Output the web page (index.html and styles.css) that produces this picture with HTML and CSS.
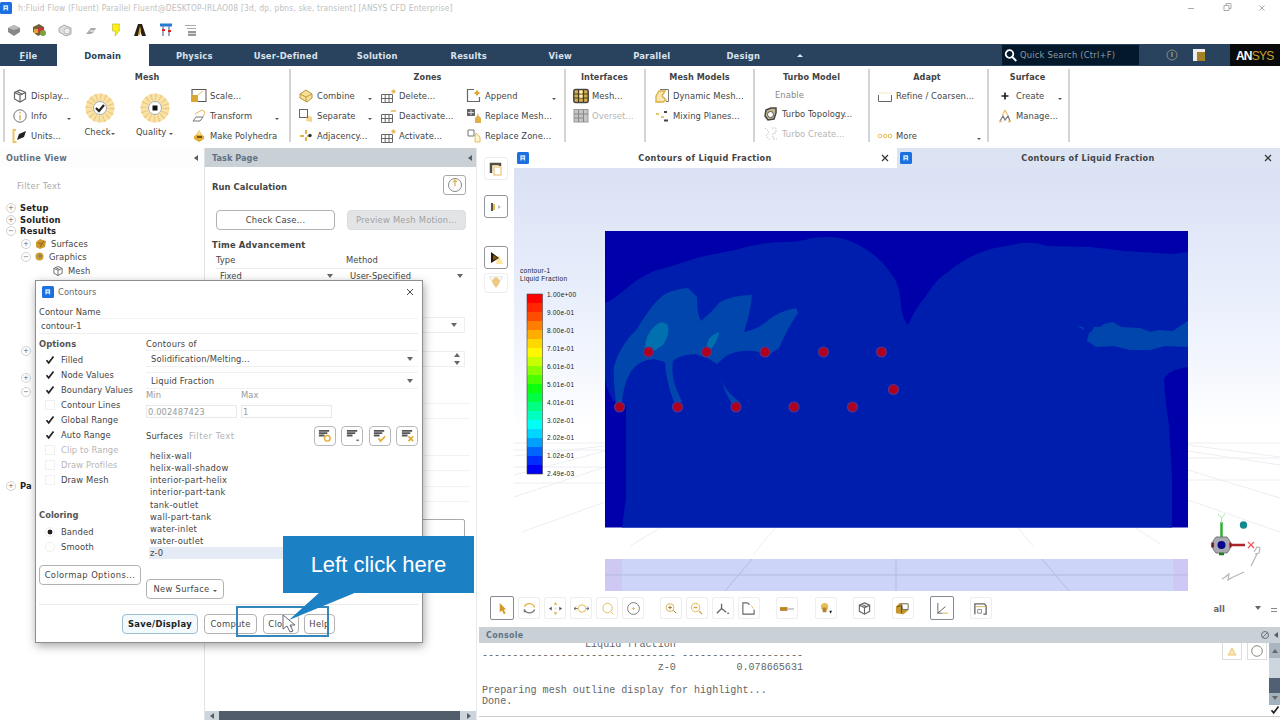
FILE: index.html
```html
<!DOCTYPE html>
<html lang="en">
<head>
<meta charset="utf-8">
<title>Fluid Flow</title>
<link rel="stylesheet" href="styles.css">
</head>
<body>
<svg class="defs" width="0" height="0">
  <defs>
    <symbol id="app" viewBox="0 0 12 12"><rect width="12" height="12" rx="1.5" fill="#1c6fe0"/><path d="M4 8.500V4h3.500v4.500M4 6.500h3.500" fill="none" stroke="#d4eaff" stroke-width="1.300"/></symbol>
    <symbol id="cube" viewBox="0 0 16 16"><path d="M8 2l5.500 2.500v6.500L8 14l-5.500-3V4.500zM2.500 4.500L8 7l5.500-2.500M8 7v7M5 3.500l6 3" fill="none" stroke="#666" stroke-width="1.200"/></symbol>
    <symbol id="info" viewBox="0 0 16 16"><circle cx="8" cy="8" r="6.200" fill="#fff" stroke="#707070"/><path d="M8 4v1.500M8 7v5" stroke="#d6ad45" stroke-width="1.300"/></symbol>
    <symbol id="units" viewBox="0 0 16 16"><path d="M4 2H1.500v12h3" fill="none" stroke="#f0c068" stroke-width="2"/><path d="M5 12l2-6 7-3-2 6z" fill="#222"/></symbol>
    <symbol id="scale" viewBox="0 0 16 16"><rect x="1" y="1.500" width="14" height="12" fill="#fff" stroke="#555"/><path d="M1 7h6v7H1z" fill="#d9a72d"/><path d="M7 7l5-4" stroke="#e3bd66"/></symbol>
    <symbol id="transform" viewBox="0 0 16 16"><path d="M2 13l3-4h7l-3 4z" fill="#fff" stroke="#777"/><path d="M4 6l7-4 3 2-2 5" fill="none" stroke="#e5bc5b"/></symbol>
    <symbol id="poly" viewBox="0 0 16 16"><path d="M8 2l3 5 2 1v3l-5 3-5-3V8l2-1z" fill="#e2ad32"/><path d="M6 8h5v2H6z" fill="#795419"/><path d="M8 2l2 5H6z" fill="#f9de97"/></symbol>
    <symbol id="combine" viewBox="0 0 16 16"><path d="M2 6l6-4 6 4v4l-5 4-7-4z" fill="#f6df9a" stroke="#b8923f"/><path d="M2 6l6 3 6-3M8 9v4" fill="none" stroke="#c4983b"/></symbol>
    <symbol id="separate" viewBox="0 0 16 16"><path d="M9 7l5 2v5l-6-1z" fill="#f3d48b"/><rect x="1.500" y="1.500" width="8" height="8" fill="#fff" stroke="#666"/></symbol>
    <symbol id="adjacency" viewBox="0 0 16 16"><path d="M8 2v12M2 8h12" stroke="#e3b34b" stroke-width="2" stroke-dasharray="4 3"/><circle cx="12" cy="7.500" r="1.700" fill="#333"/></symbol>
    <symbol id="grid" viewBox="0 0 16 16"><path d="M1.500 6.500h11v8h-11zM5.200 6.500v8M9 6.500v8M1.500 10.500h11" fill="none" stroke="#666"/><path d="M13.500 1.500v4M11.500 3.500h4" stroke="#e7b550" stroke-width="1.800"/></symbol>
    <symbol id="gridminus" viewBox="0 0 16 16"><path d="M1.500 6.500h11v8h-11zM5.200 6.500v8M9 6.500v8M1.500 10.500h11" fill="none" stroke="#666"/><path d="M11 3h5" stroke="#e7b550" stroke-width="1.500"/></symbol>
    <symbol id="append" viewBox="0 0 16 16"><path d="M8 1.500H1.500v12h12V9" fill="none" stroke="#666" stroke-width="1.200"/><path d="M11 2.500v5M8.500 5h5" stroke="#e2a72f" stroke-width="2"/></symbol>
    <symbol id="rmesh" viewBox="0 0 16 16"><path d="M1 1h8v7H1z" fill="#666"/><path d="M2 4.500h6M5 2v5" stroke="#ddd"/><path d="M11.500 5l1.500 3 2 2v5H9v-5l2-2z" fill="#e2b24a"/></symbol>
    <symbol id="rzone" viewBox="0 0 16 16"><path d="M2 2h6v6H2z" fill="#fff" stroke="#777"/><path d="M10 5l4 4v5H9V9z" fill="#fff3ca" stroke="#e5bf67"/></symbol>
    <symbol id="imesh" viewBox="0 0 16 16"><rect x=".8" y="1.500" width="14.400" height="13" rx="2" fill="#d7b04d" stroke="#444" stroke-width="1.500"/><path d="M1 6h14M1 10h14M5.500 2v12M10.500 2v12" stroke="#443c24" stroke-width="1.200"/><path d="M6.500 6.700h3v3h-3zM6.500 2.500h3v3h-3z" fill="#fff2bd"/></symbol>
    <symbol id="overset" viewBox="0 0 16 16"><rect x="1" y="1.500" width="14" height="12.500" fill="#c6c6c6" stroke="#999"/><path d="M1 6h14M1 10h9M5.500 2v12M10.500 2v12" stroke="#888"/></symbol>
    <symbol id="dynamic" viewBox="0 0 16 16"><path d="M6 1.500h8.500v12H12" fill="none" stroke="#777"/><path d="M2 8l3-5h6L8 8l4 4-3 2H2z" fill="#fae6b3" stroke="#deb044" stroke-width="1.400"/></symbol>
    <symbol id="mixing" viewBox="0 0 16 16"><path d="M2 6h3M7 9h3" stroke="#e9c469" stroke-width="2"/><path d="M10 4h3M10 12.500h4" stroke="#444" stroke-width="2"/></symbol>
    <symbol id="turbo" viewBox="0 0 16 16"><path d="M3 4l5-2h5v5l-2 6-6 1-3-4z" fill="#c4b98d" stroke="#444" stroke-width="1.500"/><circle cx="7.500" cy="8.500" r="3" fill="#fff" stroke="#555"/></symbol>
    <symbol id="tcreate" viewBox="0 0 16 16"><path d="M2 2l4 4-3 4 4 4M9 2h4v5h-3v6h4" fill="none" stroke="#ccc" stroke-dasharray="2 1"/></symbol>
    <symbol id="refine" viewBox="0 0 16 16"><path d="M1.500 7v6.500h13V7" fill="none" stroke="#666"/><path d="M2 5h12" stroke="#f8e8c4"/></symbol>
    <symbol id="more" viewBox="0 0 16 16"><g fill="none" stroke="#e4bd50"><circle cx="3" cy="8" r="1.800"/><circle cx="8" cy="8" r="1.800"/><circle cx="13" cy="8" r="1.800"/></g></symbol>
    <symbol id="plus" viewBox="0 0 16 16"><path d="M8 4.500v7M4.500 8h7" stroke="#222" stroke-width="1.700"/></symbol>
    <symbol id="manage" viewBox="0 0 16 16"><path d="M3 13l3-5 2 4 3-4 2 5" fill="none" stroke="#777" stroke-width="1.200"/><path d="M2 13.500h3M11 13.500h3M8 2l2.500 5M8 2L5.500 7" stroke="#e9c46c" stroke-width="1.300"/></symbol>
    <symbol id="list" viewBox="0 0 16 16"><path d="M2 3h11M2 5.500h9M2 8h6" stroke="#555" stroke-width="2"/></symbol>
    <symbol id="check" viewBox="0 0 10 10"><path d="M1.500 5.200l2.200 2.600L8.500 1.500" fill="none" stroke="#222" stroke-width="1.700"/></symbol>
    <symbol id="surf" viewBox="0 0 12 12"><path d="M1 4l4-3 6 2-1 6-5 2-4-2z" fill="#cc982b"/><path d="M3 5l4 1 2-3M5 9l2-3" stroke="#8a651f" fill="none"/></symbol>
    <symbol id="globe" viewBox="0 0 12 12"><circle cx="5.500" cy="5.500" r="4" fill="#cf9c2e"/><circle cx="6" cy="5" r="2" fill="#8e845e"/></symbol>
    <symbol id="gear" viewBox="0 0 30 30"><circle cx="15" cy="15" r="10.500" fill="none" stroke="#f9e2a8" stroke-width="8"/><circle cx="15" cy="15" r="11" fill="none" stroke="#ebc675" stroke-width="7" stroke-dasharray="1 3.320"/><circle cx="15" cy="15" r="6.500" fill="#fff" stroke="#aaa"/></symbol>
  </defs>
</svg>

<div class="window">
  <header class="titlebar">
    <svg class="i12"><use href="#app"/></svg>
    <span class="title">h:Fluid Flow (Fluent) Parallel Fluent@DESKTOP-IRLAO08 [3d, dp, pbns, ske, transient] [ANSYS CFD Enterprise]</span>
    <span class="winctl"><svg width="84" height="12" fill="none" stroke="#aaa"><path d="M3 6.500h6"/><path d="M39 3.500h5v5h-5zM41 3.500v-2h5v5h-2M74.500 3.500l5 5M79.500 3.500l-5 5"/></svg></span>
  </header>

  <div class="quickbar">
    <svg width="200" height="18" viewBox="0 0 200 18">
      <path d="M2 6l6-3 6 3v4l-6 4-6-4z" fill="#888"/><path d="M2 6l6 2 6-2-6-3z" fill="#bbb"/>
      <path d="M27 5l6-3 5 3v6l-6 3-5-4z" fill="#74603a"/><path d="M32 6h5v5h-5z" fill="#c33"/><circle cx="37" cy="11" r="3" fill="#79a23b"/><path d="M28 7h4v4h-4z" fill="#dba93a"/>
      <path d="M53 6l5-3 7 3v6l-5 2-7-4z" fill="#ddd" stroke="#aaa"/><circle cx="61" cy="9" r="3" fill="#eee" stroke="#bbb"/>
      <path d="M80 12l5-6h5l-2 4-3 2z" fill="#aaa"/><path d="M84 9h5" stroke="#fff"/>
      <path d="M106.500 2h7l-.5 6h1l-5 6 .5-5h-3z" fill="#ffef15" stroke="#c2b92c" stroke-width=".7"/>
      <path d="M128 14l4-12h4l4 12h-4l-2-6-2 6z" fill="#282015"/><path d="M132 13l2-9 1 4-1 5z" fill="#e2a932"/>
      <path d="M154 3h12" stroke="#247bd1" stroke-width="3"/><path d="M157 4v10M163 4v10" stroke="#788db4" stroke-width="1.500"/><path d="M156 8h3M162 9h3" stroke="#d22" stroke-width="2"/>
      <path d="M179 3.500h11M181 6.500h9" stroke="#aaa"/><path d="M182 9h8v5h-8z" fill="#999"/><path d="M182 11.500h8" stroke="#ddd"/>
    </svg>
  </div>

  <nav class="tabs">
    <span class="tab file"><u>F</u>ile</span><span class="tab on">Domain</span><span class="tab">Physics</span><span class="tab">User-Defined</span><span class="tab">Solution</span><span class="tab">Results</span><span class="tab">View</span><span class="tab">Parallel</span><span class="tab">Design</span><span class="up"></span>
    <div class="search"><svg width="13" height="13" fill="none" stroke="#fff" stroke-width="1.800"><circle cx="5.500" cy="5" r="3.800"/><path d="M8.300 8l4 4"/></svg><span>Quick Search (Ctrl+F)</span></div>
    <svg class="helpers" width="50" height="16"><circle cx="9" cy="8" r="5" fill="none" stroke="#868d80"/><path d="M9 5v5" stroke="#c9b46b"/><path d="M30 2h12v3h-8v9h-4z" fill="#eee"/><path d="M34 5h8v9h-8z" fill="#a48122"/></svg>
    <div class="brand"><b>AN</b><b class="gold">SYS</b></div>
  </nav>

  <section class="ribbon">
    <div class="group g-mesh"><h3>Mesh</h3><div class="cols">
      <div class="col c1"><p><svg><use href="#cube"/></svg>Display...</p><p><svg><use href="#info"/></svg>Info<i></i></p><p><svg><use href="#units"/></svg>Units...</p></div>
      <div class="big"><svg class="i30" viewBox="0 0 30 30"><use href="#gear"/><path d="M11 15l3 3 5-6" fill="none" stroke="#222" stroke-width="2.200"/></svg><span>Check<i></i></span></div>
      <div class="big"><svg class="i30" viewBox="0 0 30 30"><use href="#gear"/><rect x="12.500" y="12.500" width="5" height="5" fill="#111"/></svg><span>Quality <i></i></span></div>
      <div class="col c2"><p><svg><use href="#scale"/></svg>Scale...</p><p><svg><use href="#transform"/></svg>Transform<i></i></p><p><svg><use href="#poly"/></svg>Make Polyhedra</p></div>
    </div></div>
    <div class="group g-zones"><h3>Zones</h3><div class="cols">
      <div class="col c3"><p><svg><use href="#combine"/></svg>Combine<i></i></p><p><svg><use href="#separate"/></svg>Separate<i></i></p><p><svg><use href="#adjacency"/></svg>Adjacency...</p></div>
      <div class="col c4"><p><svg><use href="#grid"/></svg>Delete...</p><p><svg><use href="#gridminus"/></svg>Deactivate...</p><p><svg><use href="#grid"/></svg>Activate...</p></div>
      <div class="col c5"><p><svg><use href="#append"/></svg>Append<i></i></p><p><svg><use href="#rmesh"/></svg>Replace Mesh...</p><p><svg><use href="#rzone"/></svg>Replace Zone...</p></div>
    </div></div>
    <div class="group g-int"><h3>Interfaces</h3><div class="col"><p><svg><use href="#imesh"/></svg>Mesh...</p><p class="off"><svg><use href="#overset"/></svg>Overset...</p></div></div>
    <div class="group g-mod"><h3>Mesh Models</h3><div class="col"><p><svg><use href="#dynamic"/></svg>Dynamic Mesh...</p><p><svg><use href="#mixing"/></svg>Mixing Planes...</p></div></div>
    <div class="group g-turbo"><h3>Turbo Model</h3><div class="col"><p class="enable">Enable</p><p><svg><use href="#turbo"/></svg>Turbo Topology...</p><p class="off"><svg><use href="#tcreate"/></svg>Turbo Create...</p></div></div>
    <div class="group g-adapt"><h3>Adapt</h3><div class="col"><p><svg><use href="#refine"/></svg>Refine / Coarsen...</p><p></p><p><svg><use href="#more"/></svg>More<i></i></p></div></div>
    <div class="group g-surf"><h3>Surface</h3><div class="col"><p><svg><use href="#plus"/></svg>Create<i></i></p><p><svg><use href="#manage"/></svg>Manage...</p></div></div>
  </section>

  <main class="main">
    <aside class="outline">
      <div class="phead light"><span>Outline View</span><i class="left"></i></div>
      <div class="filter">Filter Text</div>
      <ul class="tree">
        <li class="root"><em>+</em>Setup</li><li class="root"><em>+</em>Solution</li><li class="root"><em>−</em>Results</li>
        <li class="sub"><em>+</em><svg class="i12"><use href="#surf"/></svg>Surfaces</li>
        <li class="sub sub2"><em>−</em><svg class="i12"><use href="#globe"/></svg>Graphics</li>
        <li class="leaf"><svg class="i12"><use href="#cube"/></svg>Mesh</li>
        <li class="sub g1"><em>+</em></li><li class="sub g2"><em>+</em></li><li class="sub g3"><em>−</em></li>
        <li class="root g4"><em>+</em>Pa</li>
      </ul>
    </aside>

    <section class="task">
      <div class="phead"><span>Task Page</span><i class="left"></i></div>
      <div class="taskbody">
        <div class="trow"><b>Run Calculation</b><span class="help"><svg width="16" height="16" fill="none" stroke="#888"><circle cx="8" cy="8" r="6.500"/><path d="M8 4v5M6 5l2-2 2 2" stroke="#e4b963" stroke-width="1.500"/></svg></span></div>
        <div class="tbtns"><span class="btn">Check Case...</span><span class="btn disabled">Preview Mesh Motion...</span></div>
        <b class="adv">Time Advancement</b>
        <div class="pair"><span>Type</span><span>Method</span></div>
        <div class="pair sel"><span>Fixed<i class="dn"></i></span><span>User-Specified<i class="dn"></i></span></div>
        <div class="rest">
          <div class="combo"><i class="dn"></i></div>
          <div class="combo spin"><i class="upa"></i><i class="dn"></i></div>
          <div class="faint"></div><div class="faint"></div><div class="faint last"></div>
          <div class="longbtn"></div>
        </div>
      </div>
      <div class="hscroll"><i class="left"></i><span></span><i class="right"></i></div>
    </section>

    <div class="work">
      <div class="viewer">
        <div class="sidebar">
          <span class="tool"><svg viewBox="0 0 16 16"><path d="M3 12V3h9v2" fill="none" stroke="#554f3b" stroke-width="2.500"/><rect x="6" y="6" width="7" height="8" fill="#fff" stroke="#e4ba56"/></svg></span>
          <span class="tool hot"><svg viewBox="0 0 16 16"><path d="M5 4H3v8h2z" fill="#555"/><path d="M5 5h2v6H5z" fill="#e4bd4d"/><path d="M10 6l3 2-3 2z" fill="#bbb"/></svg></span>
          <span class="tool hot third"><svg viewBox="0 0 16 16"><path d="M9 8l2-3 4 9H8z" fill="#ffe4a1"/><path d="M3 2v11l8-5z" fill="#241a09"/><path d="M5 5l5 3-5 2z" fill="#865713"/></svg></span>
          <span class="tool fourth"><svg viewBox="0 0 16 16"><path d="M1 2h14M2 3l6 9 6-9" fill="none" stroke="#ddd"/><path d="M4 5l4-3 4 3-1 4-3 4-3-4z" fill="#ecca80"/></svg></span>
        </div>
        <div class="screen">
          <div class="vtabs"><div class="vtab"><svg class="i12"><use href="#app"/></svg><b>Contours of Liquid Fraction</b><svg class="x" viewBox="0 0 8 8"><path d="M1 1l6 6M7 1L1 7"/></svg></div><div class="vtab blue"><svg class="i12"><use href="#app"/></svg><b>Contours of Liquid Fraction</b><svg class="x" viewBox="0 0 8 8"><path d="M1 1l6 6M7 1L1 7"/></svg></div></div>
          <svg class="scene" viewBox="514 168 766 423">
            <defs>
              <linearGradient id="sky" x1="0" y1="0" x2="0" y2="1"><stop offset="0" stop-color="#dae1f4"/><stop offset=".36" stop-color="#ecf1fd"/><stop offset=".62" stop-color="#fff"/></linearGradient>
            </defs>
            <rect x="514" y="168" width="766" height="423" fill="url(#sky)"/>
            <g stroke="#eceef2" fill="none"><path d="M514 443h91M514 456l91-10M514 475l91-24M514 497l91-30M522 532l83-30M514 450h91M514 467h91M514 483h91M1188 443h92M1188 451l92 14M1188 445l92 12M1188 470l92 28M1188 500l92 32M1188 458h92M1188 480h92M660 528l-30 18M775 528l-22 27M1018 528l15 18M1136 528l24 16"/></g>
            <rect x="605" y="231" width="583" height="296.500" fill="#0000aa"/>
            <path d="M605 303C613 300 618 295 627 288Q645 272 665 268L700 257L735 250Q760 242 785 242Q800 242 812 238Q835 235 850 241Q877 252 891 274Q900 282 901 307Q902 318 908 325Q915 309 926 296Q937 278 948 272Q965 257 990 249Q1012 245 1022 243Q1036 242 1046 246L1090 247L1125 251L1172 254L1188 252V367Q1168 370 1164 379Q1165 400 1169 425L1172 480V527.500H622L626 498V406Q614 407 609 392Q605 385 605 375Z" fill="#001eae"/>
            <g fill="#0046ac">
              <path d="M616 403Q613 377 614 366Q620 345 637 329Q653 302 665 294Q676 289 688 288L697 297Q697 315 701 321Q711 313 720 302Q734 295 752 295Q751 310 744 332Q756 330 766 322Q778 311 796 308L798 313Q788 327 779 348L770 354L754 351Q736 350 726 356L717 364Q705 356 695 354Q679 355 673 361Q671 375 676 388L682 402H674Q666 381 665 362L654 359Q638 360 630 373Q623 386 622 403Z"/>
              <path d="M720 377Q725 392 740 402L732 405Q725 392 720 377Z"/>
              <path d="M1087 341L1089 333L1092 331L1094 327L1100 327L1104 324L1113 322L1121 327L1140 328L1151 332L1158 330L1173 331L1180 326L1188 321V347L1165 346L1150 350L1130 350L1114 346L1096 347Z M1077 326l6 1 1 3-3-2z"/>
            </g>
            <g fill="#0070ae"><path d="M645 349Q645 334 655 326Q662 319 668 325Q670 335 663 345L654 351Z"/><path d="M706 348Q708 335 719 332Q718 341 711 349Z"/></g>
            <g fill="#b0001d" stroke="#56338b" stroke-width="1.200"><circle cx="648.500" cy="352" r="5"/><circle cx="706.500" cy="352" r="5"/><circle cx="765" cy="352" r="5"/><circle cx="823.500" cy="352" r="5"/><circle cx="881.500" cy="352" r="5"/><circle cx="619.500" cy="407" r="5"/><circle cx="677.500" cy="407" r="5"/><circle cx="736" cy="407" r="5"/><circle cx="794" cy="407" r="5"/><circle cx="852.500" cy="407" r="5"/><circle cx="893.500" cy="389.500" r="5"/></g>
            <rect x="605" y="559" width="583" height="32" fill="#ccd5f7"/><path d="M605 559h17v32h-17zM1173 559h15v32h-15z" fill="#cec8f4"/>
            <path d="M605 575h583M752 559l-27 32M896 559v32M1042 559l27 32" stroke="#b3bbde" fill="none"/>
            <g>
              <rect x="527" y="294" width="15.500" height="9" fill="#ff0000"/><rect x="527" y="303" width="15.500" height="9" fill="#ff2600"/><rect x="527" y="312" width="15.500" height="9" fill="#ff4d00"/><rect x="527" y="321" width="15.500" height="9" fill="#ff7d00"/><rect x="527" y="330" width="15.500" height="9" fill="#ffad00"/><rect x="527" y="339" width="15.500" height="9" fill="#ffd800"/><rect x="527" y="348" width="15.500" height="9" fill="#fff700"/><rect x="527" y="357" width="15.500" height="9" fill="#c7ff00"/><rect x="527" y="366" width="15.500" height="9" fill="#8aff00"/><rect x="527" y="375" width="15.500" height="9" fill="#4aff00"/><rect x="527" y="384" width="15.500" height="9" fill="#0cff0c"/><rect x="527" y="393" width="15.500" height="9" fill="#00ff43"/><rect x="527" y="402" width="15.500" height="9" fill="#00ff83"/><rect x="527" y="411" width="15.500" height="9" fill="#00ffc0"/><rect x="527" y="420" width="15.500" height="9" fill="#00fff4"/><rect x="527" y="429" width="15.500" height="9" fill="#00d6ff"/><rect x="527" y="438" width="15.500" height="9" fill="#00a0ff"/><rect x="527" y="447" width="15.500" height="9" fill="#0064ff"/><rect x="527" y="456" width="15.500" height="9" fill="#002dff"/><rect x="527" y="465" width="15.500" height="9" fill="#0000f4"/>
              <path d="M542.500 294v180H527V294z" fill="none" stroke="#444" stroke-opacity=".6"/>
            </g>
            <g class="legend">
              <text x="520" y="273.300" textLength="30">contour-1</text><text x="520" y="280.500" textLength="47">Liquid Fraction</text>
              <text x="547" y="297.300" textLength="29">1.00e+00</text><text x="547" y="315.300" textLength="27">9.00e-01</text><text x="547" y="333.200" textLength="27">8.00e-01</text><text x="547" y="351" textLength="27">7.01e-01</text><text x="547" y="368.900" textLength="27">6.01e-01</text><text x="547" y="386.800" textLength="27">5.01e-01</text><text x="547" y="404.700" textLength="27">4.01e-01</text><text x="547" y="422.600" textLength="27">3.02e-01</text><text x="547" y="440.400" textLength="27">2.02e-01</text><text x="547" y="458.300" textLength="27">1.02e-01</text><text x="547" y="476.200" textLength="27">2.49e-03</text>
            </g>
            <g fill="none"><path d="M1221.500 522v16" stroke="#2faf32" stroke-width="2.500"/><path d="M1218 514l3.500 4 3.500-4M1221.500 518v5" stroke="#a9e8a7"/><path d="M1231 545h14" stroke="#a92328" stroke-width="2.500"/><path d="M1248 542l6 6M1254 542l-6 6" stroke="#f05353" stroke-width="1.200"/><path d="M1216 537h11l3 4v8l-3 4h-11l-3-4v-8z" fill="#a9a9b1" stroke="#777"/><path d="M1212.500 542.500v5" stroke="#6b1717" stroke-width="2.500"/><path d="M1230.500 542.500v5" stroke="#8b1717" stroke-width="2"/><path d="M1219 554h5" stroke="#18811b" stroke-width="2.500"/><circle cx="1221.500" cy="545" r="4" fill="#08088c"/><circle cx="1243.500" cy="525" r="3.700" fill="#13898d"/><path d="M1251 566l6-12M1254 552l3-5 3 1-1 5-4 1M1222 579l5-3M1226 576l3-2-1 6 3-2M1231 578l13-6" stroke="#b5b5b5" stroke-width="1.200"/></g>
          </svg>
        </div>
      </div>

      <div class="toolbar">
        <span class="tb on"><svg viewBox="0 0 16 16"><path d="M5 2v10l2.500-2 2 4 1.800-1-2-4H12z" fill="#d29a28"/></svg></span>
        <span class="tb"><svg viewBox="0 0 16 16" fill="none" stroke-width="1.400"><path d="M2.500 6a6 6 0 0 1 11 1" stroke="#e3b548"/><path d="M13.500 9a6 6 0 0 1-11 0v3" stroke="#777"/></svg></span>
        <span class="tb"><svg viewBox="0 0 16 16"><path d="M8 1l2 3H6zM8 15l2-3H6z" fill="#ddb255"/><path d="M1 8l3-2v4zM15 8l-3-2v4z" fill="#555"/><path d="M7 7h2v2H7z" fill="#ddd"/></svg></span>
        <span class="tb"><svg viewBox="0 0 16 16" fill="none"><circle cx="8.500" cy="8" r="4" stroke="#e4b94e"/><path d="M0 8h4M13 8h3M2 6L0 8l2 2M14 6l2 2-2 2" stroke="#666"/></svg></span>
        <span class="tb"><svg viewBox="0 0 16 16" fill="none"><circle cx="8" cy="7.500" r="5" stroke="#e4b94e"/><path d="M12 12l2 2" stroke="#e4b94e"/></svg></span>
        <span class="tb"><svg viewBox="0 0 16 16" fill="none"><circle cx="8" cy="8" r="6.300" stroke="#777"/><path d="M8 6.500v3M6.500 8h3" stroke="#e0b85e"/></svg></span>
        <span class="tb s12"><svg viewBox="0 0 16 16" fill="none"><circle cx="7.500" cy="7" r="4.200" stroke="#ddb24d"/><path d="M5.500 7h4M7.500 5v4M11 10l3 3" stroke="#937340"/></svg></span>
        <span class="tb"><svg viewBox="0 0 16 16" fill="none"><circle cx="7" cy="7" r="4.500" stroke="#ddb24d"/><path d="M5 7h4M11 11l3 3" stroke="#d2a741" stroke-width="1.500"/></svg></span>
        <span class="tb"><svg viewBox="0 0 16 16" fill="none"><path d="M7 3v5l-5 5M7 8l5 4" stroke="#666" stroke-width="1.400"/><path d="M13 13h2" stroke="#333"/></svg></span>
        <span class="tb"><svg viewBox="0 0 16 16" fill="none"><path d="M7 2H2v12h12V9M7 2l2 2" stroke="#666" stroke-width="1.200"/><path d="M11 5l2 3" stroke="#dfb563"/></svg></span>
        <span class="tb s12"><svg viewBox="0 0 16 16"><path d="M0 6.500h8v4H0z" fill="#b68627"/><path d="M8 8.500h7" stroke="#bbb" stroke-width="1.500"/></svg></span>
        <span class="tb s12"><svg viewBox="0 0 16 16"><circle cx="7" cy="6" r="4" fill="#e7bd54"/><path d="M5 7h4v5H5z" fill="#b48333"/><path d="M12 10.500h3l-1.500 3z" fill="#222"/></svg></span>
        <span class="tb s12"><svg><use href="#cube"/></svg></span>
        <span class="tb s12"><svg viewBox="0 0 16 16"><path d="M1 6l4-4 9 1v7l-5 4-8-1z" fill="#c7962e"/><path d="M7 3h7v6H8z" fill="#fff" stroke="#666"/><path d="M2 6l5-1v8" fill="none" stroke="#63491b"/></svg></span>
        <span class="tb s12 on"><svg viewBox="0 0 16 16" fill="none"><path d="M3 2v11h5" stroke="#666"/><path d="M3 13l8-7" stroke="#555"/><path d="M8 13h6" stroke="#dfb15b"/></svg></span>
        <span class="tb s12"><svg viewBox="0 0 16 16" fill="none"><path d="M2 14V3h10l2 2v9h-3" stroke="#666" stroke-width="1.400"/><path d="M3 6h10" stroke="#ddb557"/><path d="M5 9h4v4H5z" stroke="#888"/></svg></span>
        <span class="all">all</span><i class="dn"></i><i class="eq"></i>
      </div>

      <div class="console">
        <div class="phead"><span>Console</span><svg width="12" height="12" fill="none" stroke="#667079"><circle cx="6" cy="6" r="3.500"/><path d="M3 9l6-6"/></svg><i class="left"></i></div>
        <div class="cbody">
<pre>                 Liquid fraction
-------------------------------- --------------------
                             z-0          0.078665631

Preparing mesh outline display for highlight...
Done.</pre>
          <div class="cbtns"><span><svg viewBox="0 0 16 16"><path d="M8 5l4 7H4z" fill="#f8e7b8" stroke="#e8c76d"/></svg></span><span><svg viewBox="0 0 16 16"><circle cx="8" cy="8" r="5.300" fill="none" stroke="#8b8b7a"/></svg></span></div>
          <div class="vscroll"><i class="upa"></i><span></span><i class="dn"></i><svg class="i10"><use href="#check"/></svg></div>
        </div>
      </div>
    </div>
  </main>

  <div class="dialog">
    <div class="dtitle"><svg class="i12"><use href="#app"/></svg><span>Contours</span><svg class="x" viewBox="0 0 8 8"><path d="M1 1l6 6M7 1L1 7"/></svg></div>
    <div class="dname">Contour Name</div>
    <div class="dval">contour-1</div>
    <div class="dcols">
      <div class="opts">
        <b>Options</b>
        <label><svg><use href="#check"/></svg>Filled</label>
        <label><svg><use href="#check"/></svg>Node Values</label>
        <label><svg><use href="#check"/></svg>Boundary Values</label>
        <label><s></s>Contour Lines</label>
        <label><svg><use href="#check"/></svg>Global Range</label>
        <label><svg><use href="#check"/></svg>Auto Range</label>
        <label class="off"><s></s>Clip to Range</label>
        <label class="off"><s></s>Draw Profiles</label>
        <label><s></s>Draw Mesh</label>
        <b class="coloring">Coloring</b>
        <label><s class="radio dot"></s>Banded</label>
        <label><s class="radio"></s>Smooth</label>
        <span class="btn cmap">Colormap Options...</span>
      </div>
      <div class="fields">
        <div class="of">Contours of</div>
        <div class="pick">Solidification/Melting...<i class="dn"></i></div>
        <div class="pick two">Liquid Fraction<i class="dn"></i></div>
        <div class="mm"><span>Min</span><span>Max</span></div>
        <div class="mm vals"><span>0.002487423</span><span>1</span></div>
        <div class="surf"><span>Surfaces</span><span class="ft">Filter Text</span>
          <span class="sb"><svg viewBox="0 0 16 16"><use href="#list"/><circle cx="11" cy="11" r="3" fill="#fff" stroke="#e0ae34" stroke-width="1.500"/></svg></span>
          <span class="sb"><svg viewBox="0 0 16 16"><use href="#list"/><path d="M12 13h3" stroke="#333"/></svg></span>
          <span class="sb"><svg viewBox="0 0 16 16"><use href="#list"/><path d="M7 11l2 3 5-5" fill="none" stroke="#e1ae35" stroke-width="1.800"/></svg></span>
          <span class="sb"><svg viewBox="0 0 16 16"><use href="#list"/><path d="M9 9l5 5M14 9l-5 5" stroke="#e0a92c" stroke-width="1.700"/></svg></span>
        </div>
        <ul class="names"><li>helix-wall</li><li>helix-wall-shadow</li><li>interior-part-helix</li><li>interior-part-tank</li><li>tank-outlet</li><li>wall-part-tank</li><li>water-inlet</li><li>water-outlet</li><li class="sel">z-0</li></ul>
        <span class="btn newsurf">New Surface <i></i></span>
      </div>
    </div>
    <div class="dbtns"><span class="btn save">Save/Display</span><span class="btn comp">Compute</span><span class="btn close">Close</span><span class="btn hlp">Help</span></div>
  </div>

  <div class="focus"></div>
  <div class="callout">Left click here</div>
  <svg class="tail" width="90" height="44"><path d="M38 0L7 28 75 0z" fill="#1c80c4"/><path d="M1 23v14l4-3 3 6 3-1-3-6h5z" fill="#fff" stroke="#667" stroke-width="1"/></svg>
</div>
</body>
</html>
```
FILE: styles.css
```css
* { box-sizing: border-box; margin: 0; padding: 0; }
body { width: 1280px; height: 720px; overflow: hidden; background: #fff; color: #444; font: 9.3px/12px "DejaVu Sans Condensed", "DejaVu Sans", sans-serif; font-stretch: condensed; letter-spacing: .08px; white-space: nowrap; }
.defs { display: none; }
ul { list-style: none; }
i { font-style: normal; }
.i12 { width: 12px; height: 12px; flex: none; }
.i10 { width: 10px; height: 10px; }
.window { position: relative; width: 1280px; height: 720px; display: flex; flex-direction: column; overflow: hidden; }

.titlebar { height: 16px; display: flex; align-items: center; }
.title { margin-left: 6px; width: 760px; color: #c0c0c0; font-size: 8.400px; letter-spacing: .2px; }
.winctl { margin-left: auto; margin-right: 11px; height: 12px; }
.quickbar { height: 28px; padding: 6px 0 0 6px; }

.tabs { height: 22px; background: #29425d; display: flex; align-items: center; color: #d9e3ed; font-weight: bold; letter-spacing: .2px; }
.tab { width: 91.500px; height: 22px; line-height: 23px; text-align: center; }
.tab.file { width: 57px; }
.tab.on { background: #fff; color: #29425d; }
.up { border: 3px solid transparent; border-top: 0; border-bottom-color: #dfe7ef; margin-left: 8px; }
.search { margin-left: 199px; width: 137px; height: 20px; background: #04182b; display: flex; align-items: center; padding-left: 2px; gap: 3px; color: #8d99a5; font-weight: normal; font-size: 9.300px; }
.helpers { margin-left: 24px; }
.brand { margin-left: auto; width: 50px; height: 22px; background: #080a0c; color: #fff; font: bold 12px/24px "Liberation Sans", sans-serif; padding-left: 6px; letter-spacing: -.8px; }
.brand .gold { color: #c9a02a; font-weight: normal; }

.ribbon { height: 82px; display: flex; padding: 3px 0 6px 3px; }
.group { border-left: 2px solid #d2d4d6; height: 73px; }
.group h3 { font-size: 9px; height: 16.500px; line-height: 17px; text-align: center; }
.g-surf { border-right: 2px solid #d2d4d6; }
.g-mesh { width: 286px; }
.g-zones { width: 275px; }
.g-int { width: 80px; padding-left: 7px; }
.g-mod { width: 109px; padding-left: 8px; }
.g-turbo { width: 115px; padding-left: 8px; }
.g-adapt { width: 119px; padding: 0 6px 0 7px; }
.g-surf { width: 83px; padding: 0 6px 0 8px; }
.g-int h3, .g-mod h3, .g-turbo h3 { margin-left: -8px; }
.g-adapt h3, .g-surf h3 { margin-left: -4px; }
.cols { display: flex; }
.col p { height: 20px; display: flex; align-items: center; gap: 3px; }
.col svg { width: 16px; height: 16px; flex: none; }
.col p i { margin: 6px 0 0 auto; }
.col i, .big i, .newsurf i { display: inline-block; border: 2px solid transparent; border-top-color: #555; border-bottom: 0; }
.c1 { width: 59px; margin-left: 7px; margin-right: 1px; }
.c2 { width: 88px; margin-left: 9px; }
.c3 { width: 74px; margin-left: 7px; }
.c4 { width: 74px; margin-left: 8px; }
.c5 { width: 90px; margin-left: 12px; }
.big { width: 55px; display: flex; flex-direction: column; align-items: center; padding-top: 7px; }
.i30 { width: 30px; height: 30px; margin-bottom: 3px; }
.off { color: #b5b5b5; }
.col .enable { padding-left: 12px; color: #888; height: 18.500px; }

.main { height: 572px; display: flex; }
.phead { height: 19px; background: #c9d1d7; display: flex; align-items: center; padding: 0 4px 0 7px; color: #5f7183; font-weight: bold; font-size: 9px; }
.phead.light { background: #fdfdfe; padding-left: 6px; padding-right: 6px; letter-spacing: .25px; }
.left { border: 3px solid transparent; border-left: 0; border-right: 4px solid #555d66; margin-left: auto; }
.right { border: 3px solid transparent; border-right: 0; border-left: 4px solid #555d66; }
.dn { border: 3px solid transparent; border-top: 4px solid #666; border-bottom: 0; }
.upa { border: 3px solid transparent; border-bottom: 4px solid #666; border-top: 0; }

.outline { width: 205px; border-right: 1px solid #dfe3e6; }
.filter { padding: 13px 0 0 17px; height: 35.500px; color: #aaa; letter-spacing: .35px; }
.tree li { display: flex; align-items: center; height: 13.500px; }
.tree em { width: 10px; height: 10px; border: 1px solid #d2d2d2; border-radius: 5px; font: 7px/8px "DejaVu Sans", sans-serif; text-align: center; color: #666; flex: none; letter-spacing: 0; }
.tree .root { height: 11.500px; font-weight: bold; color: #222; padding-left: 6px; gap: 4px; letter-spacing: .2px; }
.tree .sub { padding-left: 21px; gap: 4px; }
.tree .sub2 { gap: 3px; }
.tree .leaf { padding-left: 52px; gap: 4px; }
.tree .g1 { margin-top: 67px; }
.tree .g2 { margin-top: 13.500px; }
.tree .g4 { margin-top: 82px; }

.task { width: 272px; display: flex; flex-direction: column; border-right: 1px solid #e8eaec; }
.taskbody { padding-left: 7px; flex: 1; }
.trow { height: 40px; display: flex; align-items: center; }
.trow b { width: 231px; }
.help { width: 23px; height: 20px; margin-top: -4px; border: 1px solid #aaa; border-radius: 3px; display: flex; align-items: center; justify-content: center; }
.tbtns { display: flex; gap: 12px; padding: 3px 0 0 4px; }
.btn { display: inline-block; height: 20px; line-height: 18px; border: 1px solid #b2b2b2; border-radius: 4px; text-align: center; background: #fff; }
.tbtns .btn { width: 119px; letter-spacing: .22px; }
.tbtns .disabled { background: #e3e4e5; border-color: #dcddde; color: #a2a2a2; }
.adv { display: block; margin-top: 8.500px; letter-spacing: .2px; }
.pair { display: flex; padding-left: 4px; height: 14px; margin-top: 3px; }
.pair span { width: 132px; }
.pair.sel { margin-top: 0; height: 15px; padding-left: 4px; }
.pair.sel span { display: flex; align-items: center; padding: 0 13px 0 4px; border-top: 1px solid #eee; width: 131px; }
.pair.sel .dn { margin-left: auto; }
.rest { padding: 34px 6px 0 4px; }
.combo { width: 249px; height: 16px; border: 1px solid #eee; display: flex; justify-content: flex-end; align-items: center; padding-right: 7px; }
.spin { margin-top: 18px; flex-direction: column; align-items: flex-end; gap: 4px; padding-right: 4px; justify-content: center; }
.faint { height: 16px; margin-top: 36px; border: 1px solid #f2f2f2; border-width: 1px 0; }
.faint.last { margin-top: 15px; }
.longbtn { width: 249px; height: 20px; margin-top: 17px; border: 1px solid #aaa; border-radius: 2px; }
.hscroll { height: 9px; background: #ccd5dc; display: flex; align-items: center; padding: 0 5px; }
.hscroll .left { margin: 0 5px 0 0; }
.hscroll span { flex: 1; height: 9px; background: #525d6b; margin-right: 7px; }

.work { width: 803px; display: flex; flex-direction: column; padding-left: 2px; }
.viewer { display: flex; height: 443px; }
.sidebar { width: 35px; padding: 9px 0 0 5px; }
.tool { display: flex; width: 24px; height: 23px; border: 1px solid #eee; border-radius: 3px; align-items: center; justify-content: center; }
.tool.hot { border: 1.500px solid #8f969d; margin-top: 15px; }
.tool.third { margin-top: 28px; }
.tool.fourth { margin-top: 4px; height: 20px; }
.tool svg { width: 16px; height: 16px; }
.screen { width: 766px; }
.vtabs { display: flex; height: 20px; }
.vtab { width: 383px; display: flex; align-items: center; justify-content: space-between; padding: 0 8px 1px 3px; font-size: 9px; height: 20px; letter-spacing: .34px; }
.vtab.blue { background: #dce4f4; }
.x { width: 8px; height: 8px; stroke: #333; stroke-width: 1.200; }
.scene { display: block; width: 766px; height: 423px; }
.legend { font: 6.500px "Liberation Sans", sans-serif; letter-spacing: 0; fill: #222; }

.toolbar { height: 36px; display: flex; align-items: center; padding: 0 3px 2px 12px; }
.tb { width: 22px; height: 22px; margin-right: 4px; border: 1px solid #eee; border-radius: 2px; display: flex; align-items: center; justify-content: center; flex: none; }
.tb.on { border: 1px solid #838a95; width: 24px; height: 24px; margin-left: -1px; margin-right: 3px; }
.tb:nth-child(2) { margin-left: 1px; }
.tb svg { width: 15px; height: 15px; }
.tb.s12 { margin-left: 12.500px; }
.tb.s12:nth-child(7) { margin-left: 11.500px; }
.all { margin: 2px 30px 0 auto; font-weight: bold; color: #666; }
.eq { width: 6px; height: 4px; border: 1px solid #888; border-width: 1px 0; margin: 3px 0 0 10px; }
.console { height: 93px; display: flex; flex-direction: column; }
.console .phead { height: 16px; letter-spacing: .35px; font-size: 8.800px; }
.console .phead svg { margin-left: auto; margin-right: 3px; }
.console .phead .left { margin-left: 0; margin-right: -2px; }
.cbody { height: 74px; display: flex; overflow: hidden; border-bottom: 1px solid #ccc; }
pre { font: 10.100px/11.400px "Liberation Mono", monospace; letter-spacing: 0; color: #666; padding-left: 3px; margin-top: -4px; flex: 1; }
.cbtns { display: flex; gap: 5px; margin-right: 2px; }
.cbtns span { width: 20px; height: 17px; border: 1px solid #ddd; border-top: 0; display: flex; justify-content: center; }
.cbtns svg { width: 16px; height: 16px; }
.vscroll { width: 11px; display: flex; flex-direction: column; align-items: center; background: linear-gradient(#a9b6c2 0 15px, #cdd6df 15px 35px, #526073 35px 50px, #a3b1bd 50px 62px, #fff 62px); padding-top: 6px; }
.vscroll span { height: 43px; }
.vscroll .i10 { margin-top: 5px; flex: none; }

.dialog { position: absolute; left: 35px; top: 280px; width: 388px; height: 363px; background: #fff; border: 1px solid #8b8f94; box-shadow: 1px 3px 9px rgba(0,0,0,.35); padding: 0 4px 0 3px; }
.dtitle { height: 22px; display: flex; align-items: center; padding: 0 3px; gap: 4px; color: #666; }
.dtitle .x { margin-left: auto; stroke-width: .9; margin-right: 1px; }
.dname { height: 16px; line-height: 18px; border-bottom: 1px solid #f3f3f3; }
.dval { height: 15px; line-height: 14px; padding-left: 2px; border-bottom: 1px solid #eee; }
.dcols { display: flex; height: 270px; }
.opts { width: 107px; padding-top: 2.500px; display: flex; flex-direction: column; }
.opts b { height: 15.500px; line-height: 14px; color: #555; }
.opts label { height: 15.100px; display: flex; align-items: center; gap: 6px; padding-left: 6px; letter-spacing: .12px; }
.opts label svg { width: 10px; height: 10px; }
.opts s { width: 10px; height: 10px; border: 1px solid #f0f0f0; }
.opts .radio { border-radius: 5px; }
.opts .dot { background: radial-gradient(circle, #222 0 2.200px, #fff 2.700px); }
.opts .coloring { margin-top: 20px; height: 17px; letter-spacing: 0; }
.cmap { width: 102px; height: 20px; margin-top: 10px; letter-spacing: .4px; }
.fields { flex: 1; padding-top: 2.500px; }
.of { height: 13.500px; line-height: 14px; letter-spacing: .2px; }
.pick { height: 17px; display: flex; align-items: center; padding: 0 5px; border: solid #f0f0f0; border-width: 1px 0; letter-spacing: .14px; }
.pick .dn { margin-left: auto; }
.pick.two { margin-top: 5px; }
.mm { display: flex; gap: 4px; height: 11px; line-height: 11px; color: #999; }
.mm span { width: 91px; }
.mm.vals { margin-top: 5px; height: 13px; }
.mm.vals span { border: 1px solid #e8e8e8; padding-left: 1px; }
.surf { display: flex; align-items: center; height: 20px; margin-top: 7.500px; }
.ft { color: #b2b2b2; margin-left: 6px; flex: 1; letter-spacing: .5px; }
.sb { width: 22px; height: 20px; margin-left: 5.500px; border: 1px solid #b5b8bb; border-radius: 4px; display: flex; align-items: center; justify-content: center; }
.sb svg { width: 15px; height: 15px; }
.names { margin-top: 4.500px; letter-spacing: .22px; }
.names li { height: 12.150px; padding-left: 4px; }
.names .sel { background: linear-gradient(#e4ebf4, #e4ebf4) 3px 0 no-repeat; }
.newsurf { width: 78px; margin-top: 20px; letter-spacing: .3px; }
.dbtns { border-top: 1px solid #eaeaea; padding: 8.500px 0 0 83px; display: flex; }
.dbtns .btn { margin-right: 5.500px; letter-spacing: .3px; }
.dbtns .save { width: 76px; font-weight: bold; color: #222; background: #f3fafe; border-color: #9dbccc; margin-right: 6px; }
.comp { width: 53px; }
.close { width: 36px; }
.hlp { width: 31px; }

.focus { position: absolute; left: 236px; top: 606px; width: 93px; height: 31px; border: 2px solid #3387ba; }
.callout { position: absolute; left: 283px; top: 536px; width: 191px; height: 57px; background: #1c80c4; color: #fff; text-align: center; font: 22px/58px "Liberation Sans", sans-serif; letter-spacing: 0; }
.tail { position: absolute; left: 282px; top: 592px; }
```
